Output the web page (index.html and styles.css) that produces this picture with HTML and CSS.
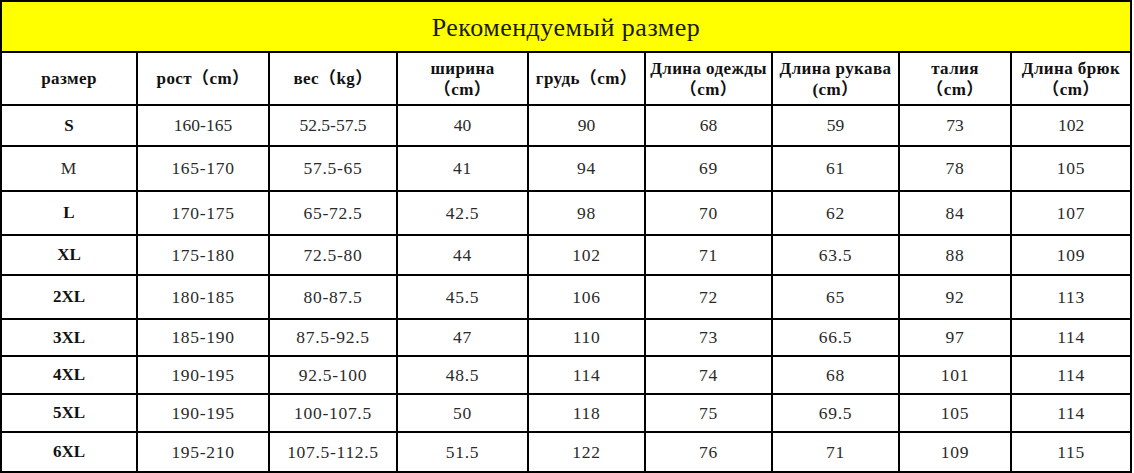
FILE: index.html
```html
<!DOCTYPE html>
<html lang="ru">
<head>
<meta charset="utf-8">
<title>Рекомендуемый размер</title>
<link rel="stylesheet" href="styles.css">
</head>
<body>
<div class="chart">
  <div class="title">Рекомендуемый размер</div>

  <div class="hd">размер</div>
  <div class="hd">рост（cm）</div>
  <div class="hd">вес（kg）</div>
  <div class="hd">ширина<br>（cm）</div>
  <div class="hd">грудь（cm）</div>
  <div class="hd">Длина одежды<br>（cm）</div>
  <div class="hd">Длина рукава<br>(cm）</div>
  <div class="hd">талия<br>（cm）</div>
  <div class="hd">Длина брюк<br>（cm）</div>

  <div class="sz">S</div><div class="c t">160-165</div><div class="c t">52.5-57.5</div><div class="c t">40</div><div class="c t">90</div><div class="c t">68</div><div class="c t">59</div><div class="c t">73</div><div class="c t">102</div>
  <div class="c">M</div><div class="c">165-170</div><div class="c">57.5-65</div><div class="c">41</div><div class="c">94</div><div class="c">69</div><div class="c">61</div><div class="c">78</div><div class="c">105</div>
  <div class="sz">L</div><div class="c">170-175</div><div class="c">65-72.5</div><div class="c">42.5</div><div class="c">98</div><div class="c">70</div><div class="c">62</div><div class="c">84</div><div class="c">107</div>
  <div class="sz">XL</div><div class="c">175-180</div><div class="c">72.5-80</div><div class="c">44</div><div class="c">102</div><div class="c">71</div><div class="c">63.5</div><div class="c">88</div><div class="c">109</div>
  <div class="sz">2XL</div><div class="c">180-185</div><div class="c">80-87.5</div><div class="c">45.5</div><div class="c">106</div><div class="c">72</div><div class="c">65</div><div class="c">92</div><div class="c">113</div>
  <div class="sz">3XL</div><div class="c">185-190</div><div class="c">87.5-92.5</div><div class="c">47</div><div class="c">110</div><div class="c">73</div><div class="c">66.5</div><div class="c">97</div><div class="c">114</div>
  <div class="sz">4XL</div><div class="c">190-195</div><div class="c">92.5-100</div><div class="c">48.5</div><div class="c">114</div><div class="c">74</div><div class="c">68</div><div class="c">101</div><div class="c">114</div>
  <div class="sz">5XL</div><div class="c">190-195</div><div class="c">100-107.5</div><div class="c">50</div><div class="c">118</div><div class="c">75</div><div class="c">69.5</div><div class="c">105</div><div class="c">114</div>
  <div class="sz">6XL</div><div class="c">195-210</div><div class="c">107.5-112.5</div><div class="c">51.5</div><div class="c">122</div><div class="c">76</div><div class="c">71</div><div class="c">109</div><div class="c">115</div>
</div>
</body>
</html>
```

FILE: styles.css
```css
html, body {
  margin: 0;
  padding: 0;
  background: #ffffff;
}

body {
  font-family: "Liberation Serif", "Noto Sans CJK SC", serif;
  color: #111;
}

.chart {
  display: grid;
  width: 1132px;
  box-sizing: border-box;
  padding: 2px;
  gap: 2px;
  background: #000;
  grid-template-columns: 134px 130px 126px 129px 115px 125px 125px 110px 118px;
  grid-template-rows: 49px 51px 39px 43px 42px 38px 42px 35px 36px 36px 38px;
}

.chart > div {
  background: #fff;
  display: flex;
  align-items: center;
  justify-content: center;
  text-align: center;
}

.chart > .title {
  grid-column: 1 / -1;
  background: #ffff00;
  font-size: 26px;
  letter-spacing: 0.5px;
  color: #1a1a00;
  padding-top: 3px;
  box-sizing: border-box;
}

.hd {
  font-weight: bold;
  font-size: 17px;
  letter-spacing: 0.4px;
  line-height: 21px;
  color: #111;
}

.sz {
  font-weight: bold;
  font-size: 17px;
  color: #111;
}

.c {
  font-size: 17.5px;
  letter-spacing: 0.7px;
  color: #2a2a2a;
}

.c.t {
  letter-spacing: 0;
}
```
